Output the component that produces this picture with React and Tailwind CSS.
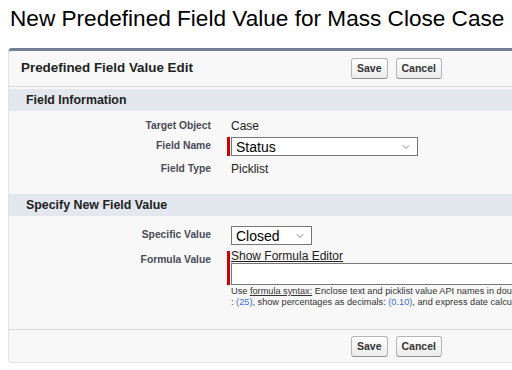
import { ChevronDown } from "lucide-react"

function Btn({ children }) {
    return (
        <button
            type="button"
            className="h-[21px] rounded-[3px] border border-[#b5b5b5] border-b-[#8f8f8f] bg-gradient-to-b from-white to-[#ececec] px-[5px] text-[10.5px] font-bold text-[#333] leading-none"
        >
            {children}
        </button>
    )
}

function Select({ value, className }) {
    return (
        <div className={"flex h-[19px] items-center justify-between border border-[#767676] bg-white pl-[4px] pr-[5px] " + className}>
            <span className="text-[14px] leading-none text-black">{value}</span>
            <ChevronDown className="h-[12px] w-[12px] text-[#666]" strokeWidth={1.5} />
        </div>
    )
}

function Label({ children, className = "" }) {
    return (
        <div className={"w-[202px] shrink-0 text-right text-[10.3px] font-bold text-[#4a4a56] " + className}>
            {children}
        </div>
    )
}

function Section({ title }) {
    return (
        <div className="flex h-[22px] items-center bg-[#e3e7ee] pl-[17px] text-[12.4px] font-bold text-[#222]">
            {title}
        </div>
    )
}

export default function App() {
    return (
        <div className="h-[370px] w-[512px] overflow-hidden bg-white font-['Liberation_Sans',Arial,sans-serif]">
            <div className="h-[48px] pl-[10px] pt-[6px] text-[22.6px] leading-[26px] text-black whitespace-nowrap">
                New Predefined Field Value for Mass Close Case
            </div>

            <div className="ml-[8px] w-[580px] rounded-[4px] border-l border-b border-t-[3px] border-[#e3e3e3] border-t-[#747e96] bg-[#f8f8f8]">
                <div className="flex h-[36px] items-center border-b border-[#dbdbdb] pl-[12px]">
                    <div className="w-[330px] text-[13.4px] font-bold text-[#222]">Predefined Field Value Edit</div>
                    <div className="flex gap-[8px]">
                        <Btn>Save</Btn>
                        <Btn>Cancel</Btn>
                    </div>
                </div>

                <div className="mt-[2px]">
                    <Section title="Field Information" />
                </div>

                <div className="flex flex-col pb-[16px] pt-[6px]">
                    <div className="flex h-[18px] items-center">
                        <Label>Target Object</Label>
                        <div className="ml-[16px] pl-[4px] text-[12px] text-[#222]">Case</div>
                    </div>
                    <div className="mt-[2px] flex h-[21px] items-start">
                        <Label className="pt-[1px]">Field Name</Label>
                        <div className="ml-[16px] flex h-[19px] items-stretch">
                            <div className="w-[3px] bg-[#c00]" />
                            <Select value="Status" className="ml-[1px] w-[187px]" />
                        </div>
                    </div>
                    <div className="mt-[2px] flex h-[18px] items-center">
                        <Label>Field Type</Label>
                        <div className="ml-[16px] pl-[4px] text-[12px] text-[#222]">Picklist</div>
                    </div>
                </div>

                <Section title="Specify New Field Value" />

                <div className="flex flex-col pt-[10px]">
                    <div className="flex h-[19px] items-start">
                        <Label className="pt-[1px]">Specific Value</Label>
                        <div className="ml-[16px] pl-[4px]">
                            <Select value="Closed" className="w-[81px]" />
                        </div>
                    </div>
                    <div className="mt-[6px] flex items-start">
                        <Label className="pt-[1px]">Formula Value</Label>
                        <div className="ml-[16px] flex flex-col">
                            <div className="flex">
                                <div className="w-[3px] self-stretch bg-[#c00]" />
                                <div className="ml-[1px] flex flex-col">
                                    <a className="text-[12px] leading-[11px] text-[#222] underline">Show Formula Editor</a>
                                    <div className="mt-[1px] h-[22px] w-[320px] border border-[#767676] bg-white" />
                                </div>
                            </div>
                            <div className="mt-[1px] pl-[4px] text-[9.2px] leading-[11px] text-[#333] whitespace-nowrap">
                                <div>
                                    Use <span className="underline">formula syntax:</span> Enclose text and picklist value API names in double quotes
                                </div>
                                <div>
                                    : <span className="text-[#3b6fd4]">(25)</span>, show percentages as decimals: <span className="text-[#3b6fd4]">(0.10)</span>, and express date calculations
                                </div>
                            </div>
                        </div>
                    </div>
                </div>

                <div className="mt-[21px] flex h-[33px] items-center border-t border-[#dbdbdb] pl-[342px]">
                    <div className="flex gap-[8px]">
                        <Btn>Save</Btn>
                        <Btn>Cancel</Btn>
                    </div>
                </div>
            </div>
        </div>
    )
}
